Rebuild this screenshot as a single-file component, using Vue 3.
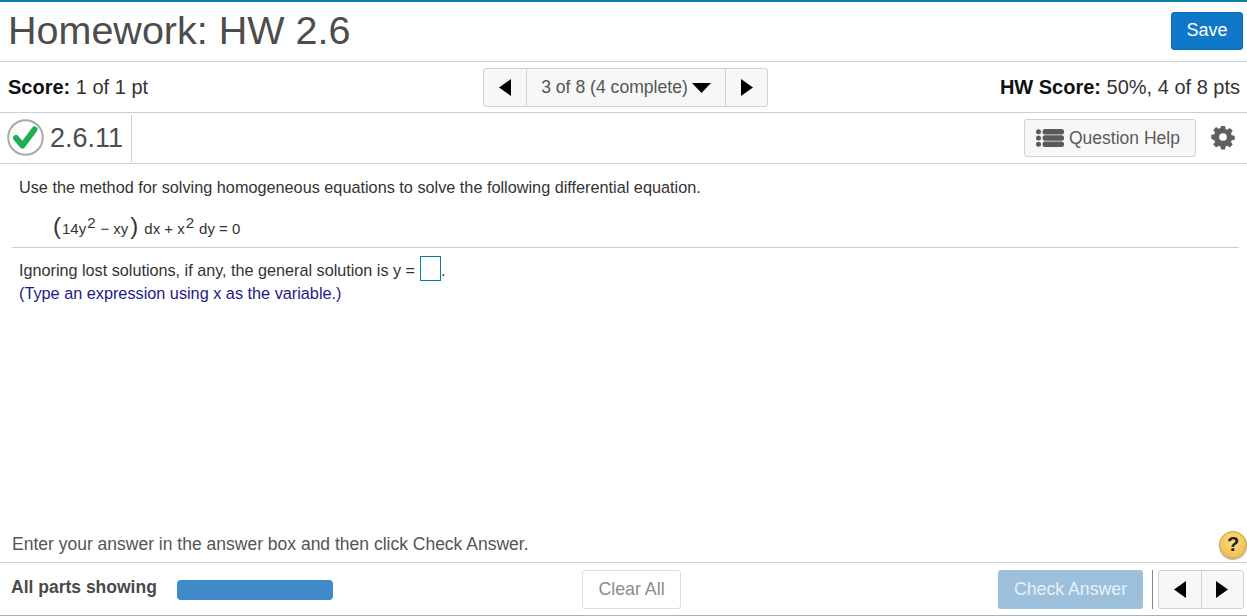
<template>
  <div class="page">
    <header class="title-row">
      <h1 class="title">Homework:&nbsp;HW 2.6</h1>
      <button class="save">Save</button>
    </header>

    <div class="score-row">
      <div class="score"><b>Score:</b> 1 of 1 pt</div>
      <div class="pager">
        <span class="pager-cell arrow-left">
          <svg width="12" height="17" viewBox="0 0 12 17"><path d="M12 0v17L0 8.500z" fill="#000" /></svg>
        </span>
        <span class="pager-cell middle">
          3 of 8 (4 complete)
          <svg class="caret" width="19" height="10" viewBox="0 0 19 10"><path d="M0 0h19L9.500 10z" fill="#000" /></svg>
        </span>
        <span class="pager-cell arrow-right">
          <svg width="12" height="17" viewBox="0 0 12 17"><path d="M0 0v17L12 8.500z" fill="#000" /></svg>
        </span>
      </div>
      <div class="hw-score"><b>HW Score:</b> 50%, 4 of 8 pts</div>
    </div>

    <div class="question-row">
      <div class="question-id">
        <svg width="37" height="37" viewBox="0 0 37 37">
          <circle cx="18.500" cy="18.500" r="17.300" fill="#fff" stroke="#a9a9a9" stroke-width="2" />
          <path d="M9 19l6.500 7.500L27.500 10.500" fill="none" stroke="#1fae51" stroke-width="6" stroke-linecap="round" stroke-linejoin="round" />
        </svg>
        <span class="question-num">2.6.11</span>
      </div>
      <div class="question-tools">
        <button class="help">
          <svg width="28" height="18" viewBox="0 0 28 18" fill="#5a5a5a">
            <circle cx="2.500" cy="2.700" r="2.500" />
            <circle cx="2.500" cy="9" r="2.500" />
            <circle cx="2.500" cy="15.300" r="2.500" />
            <rect x="6.500" y="0" width="21.500" height="5.500" rx="2.500" />
            <rect x="6.500" y="6.250" width="21.500" height="5.500" rx="2.500" />
            <rect x="6.500" y="12.500" width="21.500" height="5.500" rx="2.500" />
          </svg>
          Question Help
        </button>
        <svg class="gear" width="22" height="22" viewBox="0 0 24 24">
          <path fill="#5f5f5f" fill-rule="evenodd" d="M9.800 0h4.400l.6 3.300 1.900.8 2.800-1.900 3.100 3.100-1.900 2.800.8 1.900 3.300.6v4.400l-3.300.6-.8 1.900 1.900 2.800-3.100 3.100-2.800-1.900-1.900.8-.6 3.300H9.800l-.6-3.300-1.900-.8-2.800 1.900-3.100-3.100 1.900-2.800-.8-1.900L-.8 14v-4.400l3.300-.6.800-1.900L1.400 4.300l3.100-3.100 2.800 1.900 1.900-.8zM12 7.800a4.200 4.200 0 1 0 0 8.400 4.200 4.200 0 0 0 0-8.400z" />
        </svg>
      </div>
    </div>

    <main class="content">
      <p class="prompt">Use the method for solving homogeneous equations to solve the following differential equation.</p>
      <div class="equation"><span class="paren">(</span>14y<sup>2</sup><span class="minus">&minus;</span>xy<span class="paren close">)</span><span class="eq-rest">dx + x<sup>2</sup></span><span class="eq-end">dy = 0</span></div>
      <hr class="divider" />
      <p class="answer-line"><span>Ignoring lost solutions, if any, the general solution is y =</span><span class="answer-box"></span><span>.</span></p>
      <p class="hint">(Type an expression using x as the variable.)</p>
    </main>

    <div class="instruction-row">
      <span class="instruction">Enter your answer in the answer box and then click Check Answer.</span>
      <span class="help-badge">?</span>
    </div>

    <footer class="footer">
      <div class="parts">
        <b class="parts-label">All parts showing</b>
        <span class="progress"></span>
      </div>
      <button class="clear">Clear All</button>
      <div class="actions">
        <button class="check">Check Answer</button>
        <span class="sep"></span>
        <div class="mini-pager">
          <span class="mini-cell">
            <svg width="12" height="17" viewBox="0 0 12 17"><path d="M12 0v17L0 8.500z" fill="#000" /></svg>
          </span>
          <span class="mini-cell">
            <svg width="12" height="17" viewBox="0 0 12 17"><path d="M0 0v17L12 8.500z" fill="#000" /></svg>
          </span>
        </div>
      </div>
    </footer>
  </div>
</template>

<script setup>
</script>

<style>
html, body {
  margin: 0;
  background: #fff;
}
</style>

<style scoped>
.page {
  width: 1247px;
  height: 616px;
  box-sizing: border-box;
  border-top: 2px solid #0a7ea4;
  border-bottom: 1px solid #b0b0b0;
  display: flex;
  flex-direction: column;
  font-family: "Liberation Sans", Arial, sans-serif;
  color: #4a4a4a;
  overflow: hidden;
}

button {
  font-family: inherit;
  box-sizing: border-box;
}

.title-row {
  height: 60px;
  box-sizing: border-box;
  border-bottom: 1px solid #ccccdb;
  padding: 0 4px 0 8px;
  display: flex;
  align-items: center;
  justify-content: space-between;
}

.title {
  margin: 0 0 2px;
  font-size: 39.500px;
  font-weight: 400;
  color: #4d4d4d;
}

.save {
  width: 72px;
  height: 38px;
  background: #0f78c8;
  border: 1px solid #0c6cb6;
  border-radius: 3px;
  color: #fff;
  font-size: 18px;
  padding: 0 0 2px;
  margin-bottom: 1px;
}

.score-row {
  height: 51px;
  box-sizing: border-box;
  border-bottom: 1px solid #ccccdb;
  padding: 0 7px 0 8px;
  display: grid;
  grid-template-columns: 1fr auto 1fr;
  align-items: center;
  font-size: 20px;
  color: #333;
}

.score b,
.hw-score b {
  color: #111;
}

.hw-score {
  text-align: right;
}

.pager {
  display: flex;
  height: 39px;
  box-sizing: border-box;
  border: 1px solid #d2d2d2;
  border-radius: 3px;
  background: #f7f7f7;
  margin-left: 3px;
}

.pager-cell {
  display: flex;
  align-items: center;
  justify-content: center;
}

.arrow-left {
  width: 42px;
}

.arrow-right {
  width: 41px;
}

.middle {
  width: 200px;
  box-sizing: border-box;
  border-left: 1px solid #d2d2d2;
  border-right: 1px solid #d2d2d2;
  font-size: 17.600px;
  color: #555;
  gap: 4px;
}

.caret {
  margin-top: 1px;
}

.question-row {
  height: 51px;
  box-sizing: border-box;
  border-bottom: 1px solid #ccccdb;
  padding: 1px 13px 1px 7px;
  display: flex;
  align-items: center;
  justify-content: space-between;
}

.question-id {
  display: flex;
  align-items: center;
  gap: 6px;
  height: 47px;
  padding-right: 8px;
  border-right: 1px solid #ccccdb;
}

.question-id svg {
  margin-bottom: 2px;
}

.question-num {
  font-size: 27px;
  color: #4d4d4d;
}

.question-tools {
  display: flex;
  align-items: center;
  gap: 16px;
}

.help {
  width: 172px;
  height: 38px;
  background: #f7f7f7;
  border: 1px solid #d2d2d2;
  border-radius: 3px;
  font-size: 17.500px;
  color: #5a5a5a;
  display: flex;
  align-items: center;
  gap: 5px;
  padding: 0 0 0 11px;
}

.gear {
  overflow: visible;
  margin-bottom: 3px;
}

.content {
  flex: 1;
  padding: 0 8px 0 12px;
}

.prompt {
  margin: 14px 0 0 7px;
  font-size: 16.250px;
  line-height: 18px;
  color: #333;
}

.equation {
  margin: 18px 0 0 41px;
  height: 30px;
  line-height: 30px;
  white-space: pre;
  font-size: 15px;
  color: #333;
}

.paren {
  font-size: 24px;
  line-height: 0;
  margin-right: 1px;
}

.close {
  margin: 0 0 0 2px;
}

.equation sup {
  font-size: 15px;
  line-height: 0;
  vertical-align: 6px;
  margin-left: 1px;
}

.minus {
  margin: 0 4px 0 5px;
}

.eq-rest {
  margin-left: 6px;
}

.eq-end {
  margin-left: 5px;
}

.divider {
  margin: 3px 0 0;
  border: 0;
  border-top: 1px solid #ccccdb;
}

.answer-line {
  margin: 10px 0 0 7px;
  height: 24px;
  display: flex;
  align-items: center;
  white-space: pre;
  font-size: 16.200px;
  line-height: 24px;
  color: #333;
}

.answer-box {
  width: 21px;
  height: 25px;
  box-sizing: border-box;
  border: 1px solid #0a7ea4;
  margin: 0 0 3px 5px;
}

.hint {
  margin: 0 0 0 7px;
  font-size: 16.250px;
  line-height: 22px;
  color: #1a1a8c;
}

.instruction-row {
  height: 38px;
  box-sizing: border-box;
  border-bottom: 1px solid #ccccdb;
  padding: 2px 0 0 12px;
  display: flex;
  align-items: center;
  justify-content: space-between;
}

.instruction {
  font-size: 17.500px;
  color: #555;
}

.help-badge {
  width: 28px;
  height: 28px;
  border-radius: 50%;
  background: radial-gradient(circle at 50% 35%, #fbdc83, #eeb544);
  border: 1px solid #c79a3c;
  box-sizing: border-box;
  box-shadow: 0 1px 1px rgba(0, 0, 0, .3);
  color: #222;
  font-size: 20px;
  font-weight: 700;
  display: flex;
  align-items: center;
  justify-content: center;
}

.footer {
  flex: none;
  height: 52px;
  position: relative;
  padding: 0 3px 0 11px;
  display: flex;
  align-items: center;
  justify-content: space-between;
}

.parts {
  display: flex;
  align-items: center;
  gap: 20px;
}

.parts-label {
  font-size: 17.500px;
  color: #4a4a4a;
  margin-bottom: 4px;
}

.progress {
  width: 156px;
  height: 20px;
  background: #418aca;
  border-radius: 4px;
  margin-top: 2px;
}

.clear {
  position: absolute;
  left: 582px;
  top: 7px;
  width: 99px;
  height: 39px;
  background: #fff;
  border: 1px solid #dcdcdc;
  border-radius: 3px;
  color: #8c8c8c;
  font-size: 17.800px;
  padding: 0;
}

.actions {
  display: flex;
  align-items: center;
}

.check {
  width: 145px;
  height: 39px;
  background: #9cc0dc;
  border: 0;
  border-radius: 3px;
  color: #e9f0f6;
  font-size: 17.700px;
  padding: 0;
}

.sep {
  width: 1px;
  height: 39px;
  background: #888;
  margin: 0 5px 0 9px;
}

.mini-pager {
  width: 86px;
  height: 39px;
  box-sizing: border-box;
  border: 1px solid #d2d2d2;
  border-radius: 3px;
  background: #f7f7f7;
  display: flex;
}

.mini-cell {
  flex: 1;
  display: flex;
  align-items: center;
  justify-content: center;
}

.mini-cell + .mini-cell {
  border-left: 1px solid #d2d2d2;
}
</style>
